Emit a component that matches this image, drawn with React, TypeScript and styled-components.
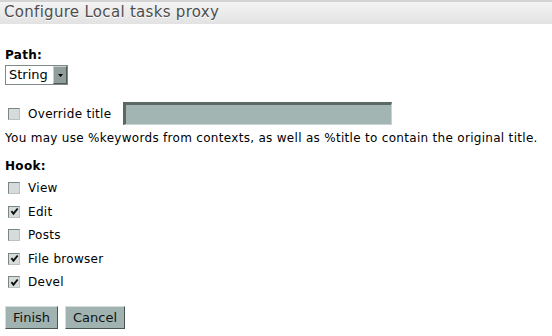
import styled, { createGlobalStyle } from 'styled-components';

const GlobalStyle = createGlobalStyle`
  html, body {
    margin: 0;
    padding: 0;
    background: #ffffff;
  }

  body {
    color: #000000;
    font-family: 'DejaVu Sans', Verdana, sans-serif;
    font-size: 12px;
    letter-spacing: 0.3px;
  }
`;

const hooks = [
  { label: 'View', checked: false },
  { label: 'Edit', checked: true },
  { label: 'Posts', checked: false },
  { label: 'File browser', checked: true },
  { label: 'Devel', checked: true },
];

function CheckBox({ checked }: { checked: boolean }) {
  return (
    <StyledBox>
      {checked ? (
        <svg width='9' height='9' viewBox='0 0 9 9'>
          <path d='M1.4 4.2 L3.5 6.7 L7.7 1.5' fill='none' stroke='#111' strokeWidth='1.9' />
        </svg>
      ) : null}
    </StyledBox>
  );
}

function App() {
  return (
    <>
      <GlobalStyle />
      <StyledHeader>Configure Local tasks proxy</StyledHeader>

      <StyledForm>
        <StyledLabel>Path:</StyledLabel>
        <StyledSelect>
          <span>String</span>
          <StyledArrow>
            <svg width='5' height='3' viewBox='0 0 5 3'>
              <path d='M0 0 H5 L2.5 3 Z' fill='#000' />
            </svg>
          </StyledArrow>
        </StyledSelect>

        <StyledOverride>
          <StyledCheckRow $width={115}>
            <CheckBox checked={false} />
            Override title
          </StyledCheckRow>
          <StyledInput />
        </StyledOverride>

        <StyledHelp>You may use %keywords from contexts, as well as %title to contain the original title.</StyledHelp>

        <StyledLabel $top={13}>Hook:</StyledLabel>
        <StyledHookList>
          {hooks.map((hook) => (
            <StyledCheckRow key={hook.label}>
              <CheckBox checked={hook.checked} />
              {hook.label}
            </StyledCheckRow>
          ))}
        </StyledHookList>

        <StyledButtons>
          <StyledButton>Finish</StyledButton>
          <StyledButton>Cancel</StyledButton>
        </StyledButtons>
      </StyledForm>
    </>
  );
}

export default App;

const StyledHeader = styled.div`
  background: linear-gradient(#f4f4f4, #e2e2e2);
  border-top: 2px solid #d4d4d4;
  box-sizing: border-box;
  color: #4d4d4d;
  font-size: 15px;
  height: 24px;
  letter-spacing: 0.3px;
  line-height: 21px;
  padding-left: 4px;
  text-shadow: 0 1px 0 #ffffff;
`;

const StyledForm = styled.div`
  display: flex;
  flex-direction: column;
  align-items: flex-start;
  padding: 0 5px;
`;

const StyledLabel = styled.div<{ $top?: number }>`
  font-weight: bold;
  line-height: 15px;
  margin-top: ${(p) => p.$top ?? 24}px;
`;

const StyledSelect = styled.div`
  align-items: stretch;
  border: 1px solid #7f8a88;
  box-sizing: border-box;
  display: flex;
  height: 20px;
  margin-top: 2px;
  width: 63px;

  span {
    background: #ffffff;
    flex: 1;
    font-size: 13px;
    letter-spacing: 0;
    line-height: 17px;
    padding-left: 3px;
  }
`;

const StyledArrow = styled.div`
  align-items: center;
  background: #8f9d9b;
  border: 1px solid;
  border-color: #c5cfce #4f5a58 #4f5a58 #c5cfce;
  display: flex;
  justify-content: center;
  width: 12px;
`;

const StyledOverride = styled.div`
  align-items: center;
  display: flex;
  margin-top: 17px;
`;

const StyledCheckRow = styled.label<{ $width?: number }>`
  align-items: center;
  display: flex;
  gap: 8px;
  height: 23.5px;
  padding-left: 3px;
  width: ${(p) => (p.$width ? `${p.$width}px` : 'fit-content')};
`;

const StyledBox = styled.span`
  align-items: center;
  background: #d6dbdb;
  border: 1px solid;
  border-color: #7b8584 #b9c2c1 #b9c2c1 #7b8584;
  box-sizing: border-box;
  display: inline-flex;
  height: 12px;
  justify-content: center;
  width: 12px;
`;

const StyledInput = styled.div`
  background: #a3b5b2;
  border-left: 3px solid #5c6866;
  border-top: 3px solid #5c6866;
  border-right: 1px solid #c8d2d1;
  border-bottom: 1px solid #c8d2d1;
  box-sizing: border-box;
  height: 23px;
  width: 269px;
`;

const StyledHelp = styled.div`
  line-height: 15px;
  margin-top: 5px;
`;

const StyledHookList = styled.div`
  display: flex;
  flex-direction: column;
  margin-top: 3px;
`;

const StyledButtons = styled.div`
  display: flex;
  gap: 7px;
  margin-top: 12px;
`;

const StyledButton = styled.button`
  background: #a1b3b1;
  border: 1px solid;
  border-color: #d3dcdb #4a5452 #4a5452 #d3dcdb;
  color: #111111;
  font-family: 'DejaVu Sans', Verdana, sans-serif;
  font-size: 13px;
  height: 23px;
  padding: 0 7px;
`;
